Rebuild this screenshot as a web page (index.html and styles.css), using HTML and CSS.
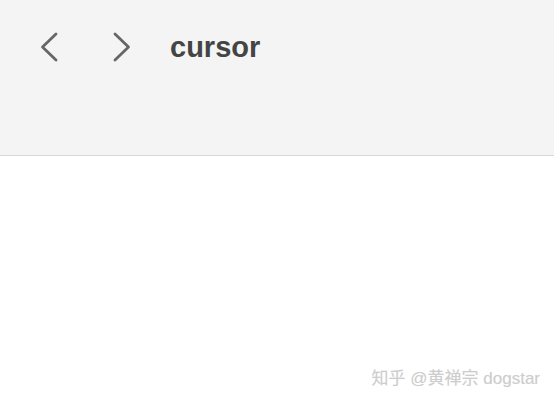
FILE: index.html
```html
<!DOCTYPE html>
<html>
<head>
<meta charset="utf-8">
<link rel="stylesheet" href="styles.css">
</head>
<body>
<div class="page">
  <header class="toolbar">
    <div class="nav">
      <svg class="chev" width="18" height="30" viewBox="0 0 18 30"><path d="M16 2 L2.5 15 L16 28" fill="none" stroke="#666666" stroke-width="2.8" stroke-linecap="round" stroke-linejoin="round"/></svg>
      <svg class="chev" width="18" height="30" viewBox="0 0 18 30"><path d="M2 2 L15.5 15 L2 28" fill="none" stroke="#666666" stroke-width="2.8" stroke-linecap="round" stroke-linejoin="round"/></svg>
      <span class="title">cursor</span>
    </div>
  </header>
  <main class="content">
    <div class="watermark">知乎 @黄禅宗 dogstar</div>
  </main>
</div>
</body>
</html>
```
FILE: styles.css
```css
html, body {
  margin: 0;
  padding: 0;
  background: #ffffff;
}
.page {
  width: 554px;
  height: 404px;
  display: flex;
  flex-direction: column;
  font-family: "Liberation Sans", Arial, sans-serif;
}
.toolbar {
  height: 155px;
  background: #f3f4f3;
  border-bottom: 1px solid #d6d7d6;
  box-sizing: content-box;
}
.nav {
  display: flex;
  align-items: center;
  padding: 32px 0 0 40px;
  height: 30px;
}
.chev {
  display: block;
}
.chev + .chev {
  margin-left: 55px;
}
.title {
  margin-left: 39px;
  font-size: 29px;
  font-weight: bold;
  color: #444444;
  line-height: 30px;
}
.content {
  flex: 1;
  display: flex;
  justify-content: flex-end;
  align-items: flex-end;
  padding: 0 14px 15px 0;
}
.watermark {
  font-family: "Liberation Sans", "Noto Sans CJK SC", sans-serif;
  font-size: 17px;
  color: #cdcdcd;
  text-shadow: 0 0 1px rgba(0,0,0,0.08);
}
```
